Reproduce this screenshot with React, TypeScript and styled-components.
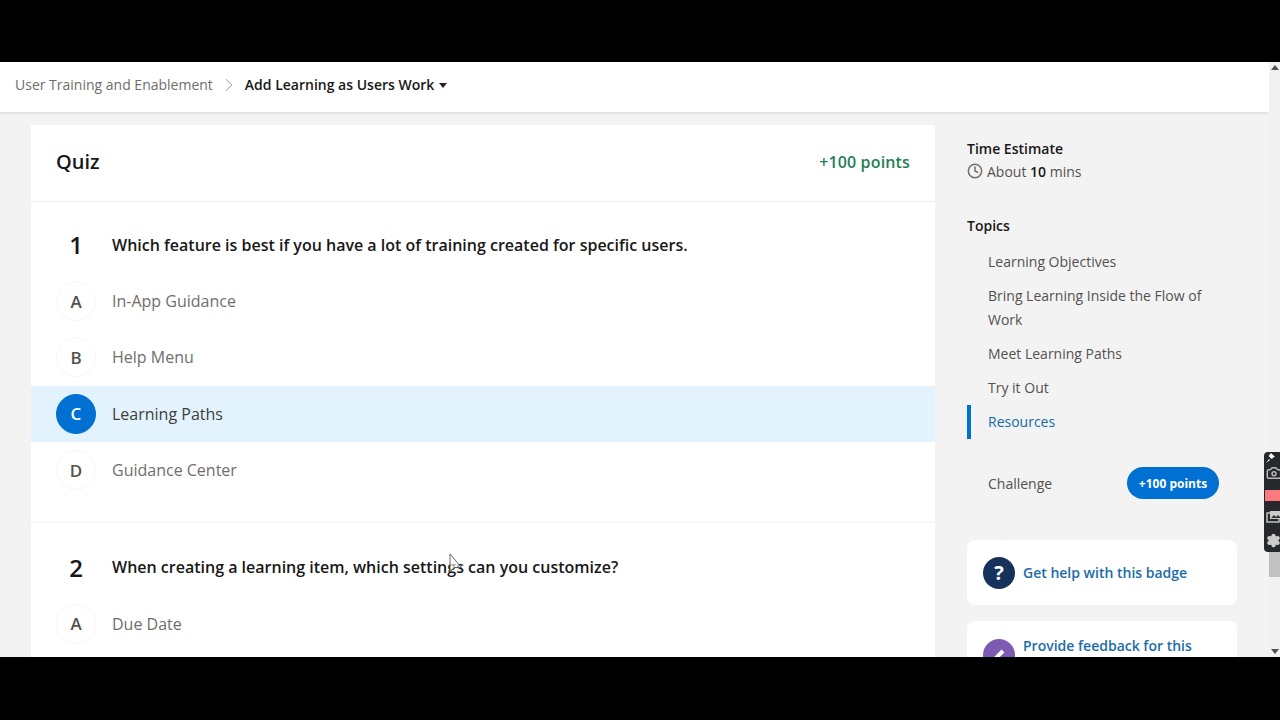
import styled, { createGlobalStyle } from "styled-components";
import { Camera, ChevronRight, Clock, Settings } from "lucide-react";

const GlobalStyle = createGlobalStyle`
    html, body {
        margin: 0;
        padding: 0;
        background: #000;
    }
    body {
        font-family: "Open Sans", "Liberation Sans", sans-serif;
    }
`;

const questions = [
    {
        num: 1,
        title: "Which feature is best if you have a lot of training created for specific users.",
        options: [
            { key: "A", text: "In-App Guidance" },
            { key: "B", text: "Help Menu" },
            { key: "C", text: "Learning Paths", selected: true },
            { key: "D", text: "Guidance Center" },
        ],
    },
    {
        num: 2,
        title: "When creating a learning item, which settings can you customize?",
        options: [{ key: "A", text: "Due Date" }],
    },
];

const topics = [
    { text: "Learning Objectives" },
    { text: "Bring Learning Inside the Flow of Work" },
    { text: "Meet Learning Paths" },
    { text: "Try it Out" },
    { text: "Resources", active: true },
];

export default function App() {
    return <Screen>
        <GlobalStyle />
        <Letterbox $height={62} />
        <Viewport>
            <Page>
                <Header>
                    <Crumb>User Training and Enablement</Crumb>
                    <ChevronRight size={22} strokeWidth={1.1} color="#a8a6a4" />
                    <CurrentCrumb>Add Learning as Users Work</CurrentCrumb>
                    <Caret />
                </Header>
                <Content>
                    <Card>
                        <CardHead>
                            <CardTitle>Quiz</CardTitle>
                            <Points>+100 points</Points>
                        </CardHead>
                        {questions.map((q) => (
                            <Question key={q.num}>
                                <QuestionRow>
                                    <QuestionNum>{q.num}</QuestionNum>
                                    <QuestionTitle>{q.title}</QuestionTitle>
                                </QuestionRow>
                                {q.options.map((o) => (
                                    <Option key={o.key} $selected={o.selected}>
                                        <OptionKey $selected={o.selected}>{o.key}</OptionKey>
                                        <OptionText $selected={o.selected}>{o.text}</OptionText>
                                    </Option>
                                ))}
                            </Question>
                        ))}
                    </Card>
                    <Sidebar>
                        <SideLabel>Time Estimate</SideLabel>
                        <TimeRow>
                            <Clock size={16} strokeWidth={2.2} color="#706e6b" />
                            <span>About <b>10</b> mins</span>
                        </TimeRow>
                        <TopicsLabel>Topics</TopicsLabel>
                        <TopicList>
                            {topics.map((t) => (
                                <Topic key={t.text} $active={t.active}>{t.text}</Topic>
                            ))}
                        </TopicList>
                        <ChallengeRow>
                            <span>Challenge</span>
                            <PointsPill>+100 points</PointsPill>
                        </ChallengeRow>
                        <ActionCards>
                            <ActionCard>
                                <ActionIcon $color="#16325c">?</ActionIcon>
                                <ActionLink>Get help with this badge</ActionLink>
                            </ActionCard>
                            <ActionCard>
                                <ActionIcon $color="#7f5ab3">
                                    <svg width="18" height="18" viewBox="0 0 18 18">
                                        <path d="M3 15l.8-3.6L11.6 3.6l2.8 2.8-7.8 7.8L3 15z" fill="#fff" />
                                    </svg>
                                </ActionIcon>
                                <ActionLink>Provide feedback for this badge</ActionLink>
                            </ActionCard>
                        </ActionCards>
                    </Sidebar>
                </Content>
            </Page>
            <Scrollbar>
                <ArrowUp />
                <Thumb />
                <ArrowDown />
            </Scrollbar>
            <Recorder>
                <PinIcon width="10" height="10" viewBox="0 0 10 10">
                    <path d="M5 0l4 4-2 .6-1 1.6L2.6 3 5 0zM3 6L0 10l4-3-1-1z" fill="#fff" />
                </PinIcon>
                <Camera size={16} color="#bbb" strokeWidth={2.2} />
                <RecordMark />
                <svg width="16" height="14" viewBox="0 0 16 14">
                    <rect x="1" y="3" width="12" height="9" fill="none" stroke="#ccc" strokeWidth="1.4" />
                    <rect x="4" y="1" width="12" height="8" fill="#ccc" />
                    <path d="M5 8l3-3 2 2 2-2 3 3z" fill="#333" />
                </svg>
                <Settings size={15} color="#ccc" fill="#ccc" strokeWidth={2} />
            </Recorder>
            <Cursor width="16" height="24" viewBox="0 0 16 24">
                <path d="M1 1v18l4.5-4.5h7z" fill="#fff" fillOpacity="0.65" stroke="#555" strokeWidth="0.9" />
            </Cursor>
        </Viewport>
        <Letterbox $height={63} />
    </Screen>
}

const Screen = styled.div`
    width: 1280px;
    height: 720px;
    overflow: hidden;
    display: flex;
    flex-direction: column;
`;

const Letterbox = styled.div<{ $height: number }>`
    height: ${(p) => p.$height}px;
    background: #000;
    flex-shrink: 0;
`;

const Viewport = styled.div`
    position: relative;
    height: 595px;
    display: flex;
    overflow: hidden;
    background: #f3f3f3;
`;

const Page = styled.div`
    width: 1269px;
    display: flex;
    flex-direction: column;
`;

const Header = styled.div`
    height: 50px;
    flex-shrink: 0;
    box-sizing: border-box;
    display: flex;
    align-items: center;
    gap: 5px;
    padding: 0 0 5px 15px;
    background: #fff;
    box-shadow: 0 1px 3px rgba(0, 0, 0, 0.12);
    font-size: 14px;
`;

const Crumb = styled.span`
    color: #706e6b;
`;

const CurrentCrumb = styled.span`
    color: #181818;
    font-weight: 600;
`;

const Caret = styled.span`
    width: 0;
    height: 0;
    margin-top: 2px;
    border-left: 4px solid transparent;
    border-right: 4px solid transparent;
    border-top: 5px solid #222;
`;

const Content = styled.div`
    display: flex;
    align-items: flex-start;
    padding: 13px 0 0 31px;
    gap: 32px;
`;

const Card = styled.div`
    width: 904px;
    flex-shrink: 0;
    background: #fff;
`;

const CardHead = styled.div`
    height: 77px;
    box-sizing: border-box;
    padding: 0 25px 3px;
    display: flex;
    align-items: center;
    justify-content: space-between;
    border-bottom: 1px solid #efefef;
`;

const CardTitle = styled.div`
    font-size: 20px;
    font-weight: 600;
    color: #181818;
`;

const Points = styled.div`
    font-size: 16px;
    font-weight: 600;
    letter-spacing: 0.15px;
    color: #1f7f55;
`;

const Question = styled.div`
    padding: 21px 0 23px;
    border-bottom: 2px solid #f8f8f8;
    & + & {
        padding-top: 22.5px;
    }
`;

const QuestionRow = styled.div`
    height: 44px;
    display: flex;
    align-items: center;
    padding: 0 25px 1px;
    box-sizing: border-box;
    margin-bottom: 6px;
`;

const QuestionNum = styled.div`
    width: 40px;
    margin-right: 16px;
    text-align: center;
    font-size: 24px;
    font-weight: 600;
    color: #181818;
`;

const QuestionTitle = styled.div`
    font-size: 16px;
    font-weight: 600;
    color: #181818;
`;

const Option = styled.div<{ $selected?: boolean }>`
    height: 56.33px;
    display: flex;
    align-items: center;
    gap: 16px;
    padding: 0 25px;
    background: ${(p) => (p.$selected ? "#e2f3fd" : "transparent")};
`;

const OptionKey = styled.div<{ $selected?: boolean }>`
    width: 40px;
    height: 40px;
    box-sizing: border-box;
    border-radius: 50%;
    display: flex;
    align-items: center;
    justify-content: center;
    font-size: 17px;
    font-weight: 600;
    color: ${(p) => (p.$selected ? "#fff" : "#54514f")};
    background: ${(p) => (p.$selected ? "#0070d2" : "#fff")};
    border: 1px solid ${(p) => (p.$selected ? "#0070d2" : "#f6f6f6")};
`;

const OptionText = styled.div<{ $selected?: boolean }>`
    font-size: 16px;
    color: ${(p) => (p.$selected ? "#3e3e3c" : "#706e6b")};
`;

const Sidebar = styled.div`
    width: 270px;
    flex-shrink: 0;
    font-size: 14px;
    color: #3e3e3c;
`;

const SideLabel = styled.div`
    margin-top: 13px;
    height: 21px;
    line-height: 21px;
    font-weight: 600;
    color: #181818;
`;

const TimeRow = styled.div`
    height: 24px;
    display: flex;
    align-items: center;
    gap: 4px;
    color: #54514f;
    b {
        font-weight: 600;
        color: #181818;
    }
`;

const TopicsLabel = styled(SideLabel)`
    margin-top: 32px;
`;

const TopicList = styled.div`
    margin-top: 9px;
    padding-bottom: 11px;
    border-bottom: 1px solid #f0f0f0;
`;

const Topic = styled.div<{ $active?: boolean }>`
    padding: 5px 30px 5px ${(p) => (p.$active ? 17 : 21)}px;
    line-height: 24px;
    color: ${(p) => (p.$active ? "#0f6ba8" : "#54514f")};
    border-left: ${(p) => (p.$active ? "4px solid #0070d2" : "none")};
`;

const ChallengeRow = styled.div`
    height: 64px;
    display: flex;
    align-items: center;
    justify-content: space-between;
    padding: 0 18px 0 21px;
    border-bottom: 1px solid #f0f0f0;
    color: #54514f;
`;

const PointsPill = styled.div`
    width: 92px;
    height: 32px;
    border-radius: 16px;
    display: flex;
    align-items: center;
    justify-content: center;
    background: #0070d2;
    color: #fff;
    font-size: 12px;
    font-weight: 700;
`;

const ActionCards = styled.div`
    margin-top: 24px;
    display: flex;
    flex-direction: column;
    gap: 16px;
`;

const ActionCard = styled.div`
    min-height: 65px;
    box-sizing: border-box;
    padding: 16px;
    display: flex;
    align-items: center;
    gap: 8px;
    background: #fff;
    border-radius: 8px;
`;

const ActionIcon = styled.div<{ $color: string }>`
    width: 32px;
    height: 32px;
    flex-shrink: 0;
    border-radius: 50%;
    display: flex;
    align-items: center;
    justify-content: center;
    background: ${(p) => p.$color};
    color: #fff;
    font-size: 20px;
    font-weight: 700;
`;

const ActionLink = styled.div`
    font-size: 14px;
    font-weight: 600;
    line-height: 18px;
    color: #1b6ca8;
`;

const Scrollbar = styled.div`
    width: 11px;
    display: flex;
    flex-direction: column;
    align-items: center;
    background: #f1f1f1;
`;

const ArrowUp = styled.div`
    margin-top: 3px;
    border-left: 4px solid transparent;
    border-right: 4px solid transparent;
    border-bottom: 5px solid #505050;
`;

const Thumb = styled.div`
    width: 100%;
    height: 25px;
    margin-top: 482px;
    background: #c1c1c1;
`;

const ArrowDown = styled.div`
    margin-top: auto;
    margin-bottom: 3px;
    border-left: 4px solid transparent;
    border-right: 4px solid transparent;
    border-top: 5px solid #505050;
`;

const Recorder = styled.div`
    position: absolute;
    left: 1264px;
    top: 390px;
    width: 24px;
    height: 100px;
    box-sizing: border-box;
    padding: 1px 0 0 2px;
    display: flex;
    flex-direction: column;
    gap: 9px;
    align-items: flex-start;
    background: #26282c;
    border-radius: 4px;
`;

const PinIcon = styled.svg`
    margin-bottom: -7px;
`;

const RecordMark = styled.div`
    width: 20px;
    height: 11px;
    margin-left: -1px;
    background: #fb7a7f;
`;

const Cursor = styled.svg`
    position: absolute;
    left: 449px;
    top: 491px;
`;
